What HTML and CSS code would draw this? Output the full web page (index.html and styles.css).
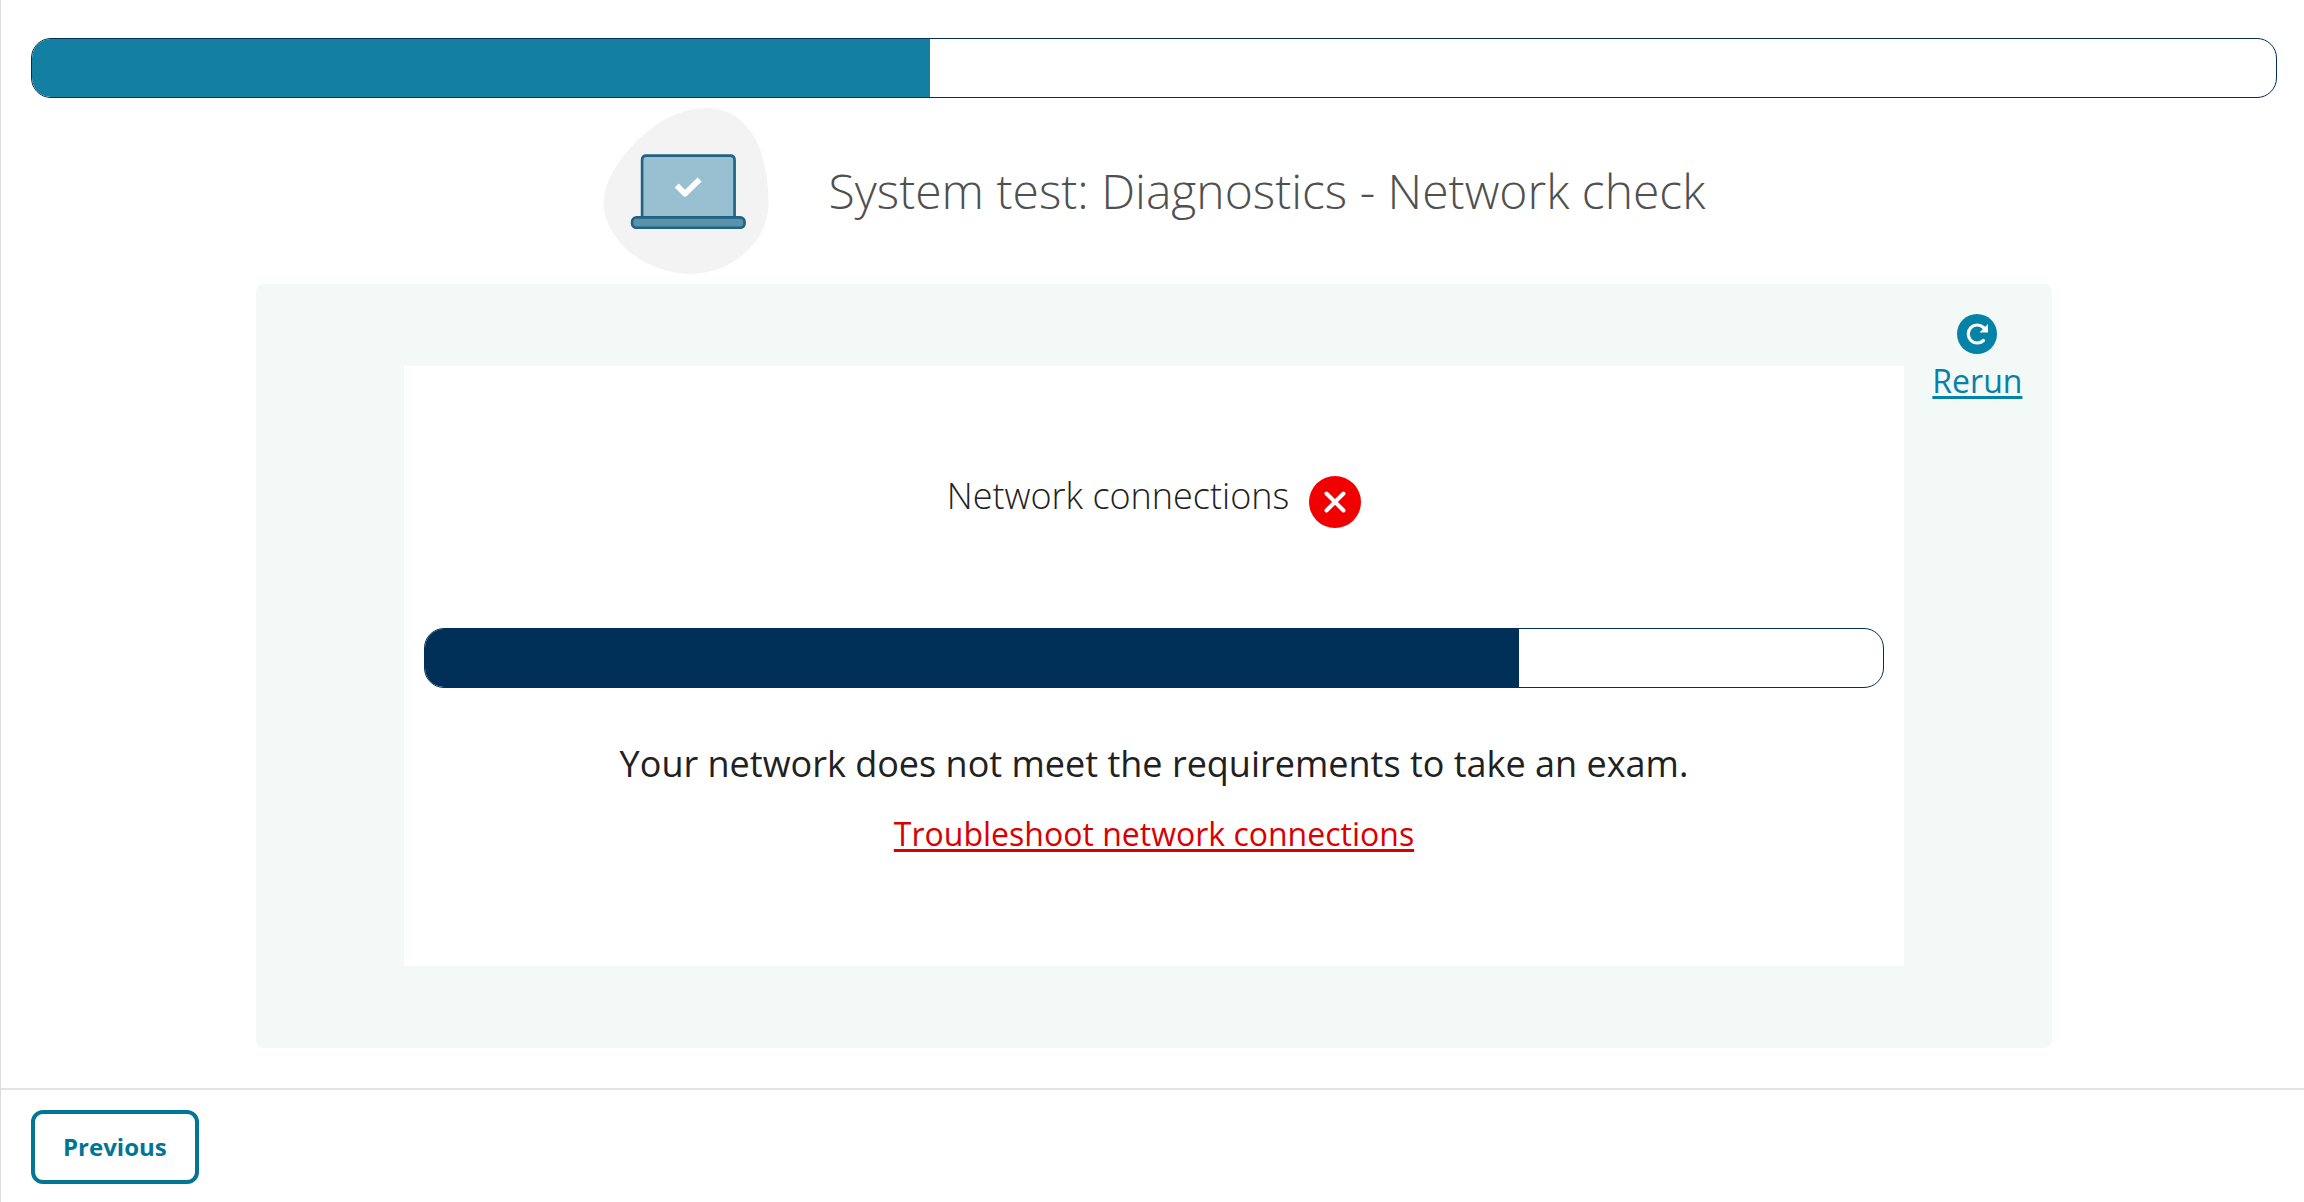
FILE: index.html
```html
<!DOCTYPE html>
<html lang="en">
<head>
<meta charset="utf-8">
<meta name="viewport" content="width=device-width, initial-scale=1">
<title>System test: Diagnostics - Network check</title>
<link rel="stylesheet" href="styles.css">
</head>
<body>
<main class="main">
  <div class="bar" role="progressbar" aria-label="System test progress" aria-valuenow="40" aria-valuemin="0" aria-valuemax="100">
    <div class="bar-fill bar-fill-teal" style="width: 40%"></div>
  </div>
  <header class="heading">
    <svg class="heading-icon" viewBox="38 53 496 499" aria-hidden="true">
      <path fill="#f3f3f3" d="M38 340C38 280 80 210 138 152C196 96 270 53 348 53C410 53 462 86 495 148C522 200 534 270 534 340C534 400 505 455 455 496C410 534 350 552 302 552C235 552 160 526 108 478C62 434 38 385 38 340Z"/>
      <path fill="#98c0d1" stroke="#1f6484" stroke-width="8" d="M154 382V209Q154 196 167 196H419Q432 196 432 209V382Z"/>
      <rect x="124" y="382" width="338" height="31" rx="13" fill="#5b92aa" stroke="#1f6484" stroke-width="8"/>
      <path fill="none" stroke="#fff" stroke-width="17" stroke-linejoin="round" d="M258 286L283 311L327 268"/>
    </svg>
    <h1 class="title">System test: Diagnostics - Network check</h1>
  </header>
  <section class="panel">
    <div class="card">
      <div class="check">
        <h2 class="check-name">Network connections</h2>
        <svg class="check-icon" viewBox="0 0 52 52" role="img" aria-label="Failed">
          <circle cx="26" cy="26" r="26" fill="#f00000"/>
          <path stroke="#fff" stroke-width="4" stroke-linecap="round" d="M17.500 17.500L34.500 34.500M34.500 17.500L17.500 34.500"/>
        </svg>
      </div>
      <div class="bar" role="progressbar" aria-label="Network check progress" aria-valuenow="75" aria-valuemin="0" aria-valuemax="100">
        <div class="bar-fill bar-fill-navy" style="width: 75%"></div>
      </div>
      <p class="message">Your network does not meet the requirements to take an exam.</p>
      <a class="link link-error" href="#troubleshoot">Troubleshoot network connections</a>
    </div>
    <a class="link rerun" href="#rerun">
      <svg class="rerun-icon" viewBox="0 0 40 40" aria-hidden="true">
        <circle cx="20" cy="20" r="20" fill="#0582a7"/>
        <path fill="none" stroke="#fff" stroke-width="3.200" stroke-linecap="round" d="M26.500 13.500A9 9 0 1 0 26.500 26.500"/>
        <path fill="#fff" d="M31 10V18.500H22.500Z"/>
      </svg>
      <span>Rerun</span>
    </a>
  </section>
</main>
<footer class="footer">
  <button class="previous" type="button">Previous</button>
</footer>
</body>
</html>
```
FILE: styles.css
```css
* {
  box-sizing: border-box;
}

body {
  margin: 0;
  min-height: 100vh;
  display: flex;
  flex-direction: column;
  border-left: 1px solid #dcdcdc;
  background: #fff;
  color: #212121;
  font-family: "Open Sans", sans-serif;
}

.main {
  display: flex;
  flex-direction: column;
  align-items: center;
  padding: 38px 27px 40px 30px;
}

.bar {
  width: 100%;
  height: 60px;
  border: 1px solid #003057;
  border-radius: 20px;
  overflow: hidden;
}

.bar-fill {
  height: 100%;
}

.bar-fill-teal {
  background: #127fa3;
}

.bar-fill-navy {
  background: #003057;
}

.heading {
  display: flex;
  align-items: center;
  justify-content: center;
  gap: 60px;
  padding: 10px 0;
}

.heading-icon {
  width: 166px;
  height: 166px;
}

.title {
  margin: 0;
  color: #505050;
  font-size: 48px;
  font-weight: 300;
  line-height: 72px;
}

.panel {
  width: 80%;
  display: grid;
  grid-template-columns: 148px 1fr 148px;
  align-items: start;
  padding: 30px 0 82px;
  border-radius: 8px;
  background: #f3f9f7;
}

.card {
  grid-column: 2;
  display: flex;
  flex-direction: column;
  align-items: center;
  margin-top: 52px;
  padding: 104px 20px 108px;
  background: #fff;
}

.check {
  display: flex;
  gap: 20px;
  margin-bottom: 100px;
}

.check-name {
  margin: 0;
  font-size: 36px;
  font-weight: 300;
  line-height: 52px;
}

.check-icon {
  width: 52px;
  height: 52px;
  margin-top: 6px;
}

.message {
  margin: 50px 0 20px;
  font-size: 36px;
  line-height: 52px;
}

.link {
  font-size: 32px;
  line-height: 48px;
  text-underline-offset: 3px;
  text-decoration-thickness: 3px;
}

.link-error {
  color: #db0000;
}

.rerun {
  display: flex;
  flex-direction: column;
  align-items: center;
  gap: 3px;
  padding-right: 2px;
  color: #0582a7;
}

.rerun-icon {
  width: 40px;
  height: 40px;
}

.footer {
  flex: 1;
  padding: 20px 30px 16px;
  border-top: 2px solid #e3e3e3;
}

.previous {
  padding: 15px 28px;
  border: 4px solid #007596;
  border-radius: 12px;
  background: #fff;
  color: #007596;
  font-family: inherit;
  font-size: 24px;
  font-weight: 700;
  line-height: 36px;
}
```
